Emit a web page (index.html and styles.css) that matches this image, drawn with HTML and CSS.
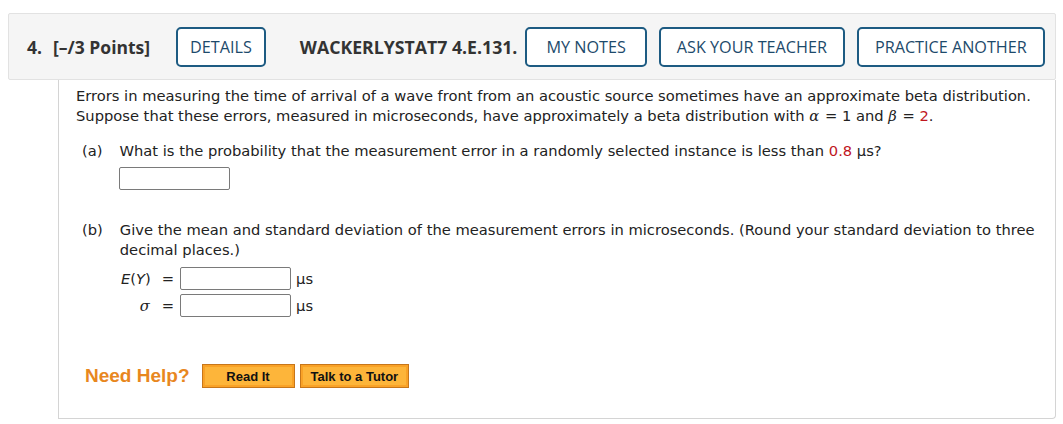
FILE: index.html
```html
<!DOCTYPE html>
<html lang="en">
<head>
    <meta charset="UTF-8">
    <meta name="viewport" content="width=device-width, initial-scale=1.0">
    <title>Question 4</title>
    <link rel="stylesheet" href="styles.css">
</head>
<body>
    <div class="question">
        <div class="question-header">
            <span class="q-number">4.</span>
            <span class="q-points">[&ndash;/3 Points]</span>
            <button class="q-btn details">DETAILS</button>
            <span class="q-code">WACKERLYSTAT7 4.E.131.</span>
            <button class="q-btn notes">MY NOTES</button>
            <button class="q-btn">ASK YOUR TEACHER</button>
            <button class="q-btn">PRACTICE ANOTHER</button>
        </div>
        <div class="question-body">
            <p class="intro">Errors in measuring the time of arrival of a wave front from an acoustic source sometimes have an approximate beta distribution. Suppose that these errors, measured in microseconds, have approximately a beta distribution with <i class="math">&alpha;</i> = 1 and <i class="math">&beta;</i> = <span class="red">2</span>.</p>

            <div class="part">
                <span class="part-label">(a)</span>
                <div class="part-content">
                    <p>What is the probability that the measurement error in a randomly selected instance is less than <span class="red">0.8</span> &micro;s?</p>
                    <input type="text" class="answer">
                </div>
            </div>

            <div class="part part-b">
                <span class="part-label">(b)</span>
                <div class="part-content">
                    <p>Give the mean and standard deviation of the measurement errors in microseconds. (Round your standard deviation to three decimal places.)</p>
                    <div class="answer-rows">
                        <span class="var"><i>E</i>(<i>Y</i>)</span><span class="eq">=</span><input type="text" class="answer"><span class="unit">&micro;s</span>
                        <span class="var"><i class="math">&sigma;</i></span><span class="eq">=</span><input type="text" class="answer"><span class="unit">&micro;s</span>
                    </div>
                </div>
            </div>

            <div class="need-help">
                <span class="help-label">Need Help?</span>
                <button class="help-btn read">Read It</button>
                <button class="help-btn">Talk to a Tutor</button>
            </div>
        </div>
    </div>
</body>
</html>
```

FILE: styles.css
```css
body {
    margin: 0;
    padding: 13px 7px 0 8px;
    background-color: #ffffff;
    font-family: "DejaVu Sans", Verdana, sans-serif;
    color: #222;
}

.question-header {
    display: flex;
    align-items: center;
    height: 65px;
    padding: 0 0 0 18px;
    background-color: #f5f5f5;
    border: 1px solid #e2e2e2;
    border-radius: 2px;
    font-family: "Open Sans", sans-serif;
    color: #333;
    white-space: nowrap;
}

.question-header > * {
    flex: none;
}

.q-number {
    font-weight: bold;
    font-size: 17.5px;
    margin-right: 11px;
}

.q-points {
    font-weight: bold;
    font-size: 17.5px;
    margin-right: 26px;
}

.q-code {
    font-weight: bold;
    font-size: 17.7px;
    margin: 0 8px 0 34px;
}

.q-btn {
    height: 40px;
    padding: 0 16px;
    background-color: #ffffff;
    border: 2px solid #1d5b82;
    border-radius: 5px;
    font-family: "Open Sans", sans-serif;
    font-size: 16.2px;
    color: #1d4a6b;
    cursor: pointer;
}

.q-btn.details {
    padding: 0 12px;
}

.q-btn.notes {
    padding: 0 19px;
}

.q-btn + .q-btn {
    margin-left: 12px;
}

.question-body {
    margin-left: 50px;
    padding: 6px 20px 30px 17px;
    border-left: 1px solid #d4d4d4;
    border-right: 1px solid #d4d4d4;
    border-bottom: 1px solid #d4d4d4;
    border-bottom-right-radius: 4px;
    font-size: 14.7px;
    line-height: 20px;
}

p {
    margin: 0;
}

.intro {
    margin-bottom: 15px;
}

.math {
    display: inline-block;
    line-height: 1;
    font-family: "DejaVu Serif", serif;
    padding-right: 1px;
}

.red {
    color: #c0161e;
}

.part {
    display: flex;
    gap: 17px;
    margin-left: 6px;
}

.part-label {
    flex: none;
}

.part-content p {
    margin-bottom: 6px;
}

.part-b {
    margin-top: 30px;
}

.answer {
    box-sizing: border-box;
    width: 111px;
    height: 23px;
    margin: 0;
    border: 1px solid #7a7a7a;
    border-radius: 2px;
}

.answer-rows {
    display: grid;
    grid-template-columns: 31px auto 111px auto;
    justify-content: start;
    align-items: center;
    row-gap: 4px;
    margin-top: 7px;
}

.var {
    text-align: right;
    white-space: nowrap;
}

.eq {
    padding: 0 6px 0 11px;
}

.unit {
    padding-left: 5px;
}

.need-help {
    display: flex;
    align-items: center;
    margin-top: 47px;
    margin-left: 9px;
}

.help-label {
    font-family: "Liberation Sans", Arial, sans-serif;
    font-weight: bold;
    font-size: 19px;
    color: #e8871e;
    margin-right: 12px;
}

.help-btn {
    height: 24px;
    padding: 0 10px;
    background-color: #fdb53a;
    border: 1px solid #c7761a;
    box-shadow: inset 0 0 0 2px #f9a227;
    font-family: "Liberation Sans", Arial, sans-serif;
    font-weight: bold;
    font-size: 13px;
    color: #111;
}

.help-btn.read {
    width: 93px;
    margin-right: 5px;
}
```
